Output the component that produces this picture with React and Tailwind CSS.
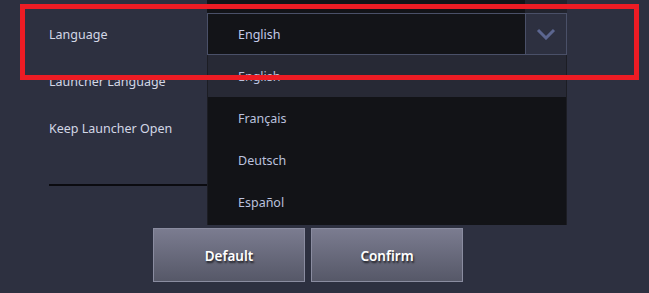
import React from "react";

export default function App() {
  const items = ["English", "Français", "Deutsch", "Español"];
  return (
    <div
      className="relative w-[649px] h-[293px] overflow-hidden bg-[#2d3040]"
      style={{ fontFamily: '"Noto Sans", "Open Sans", sans-serif' }}
    >
      {/* top strip: bottom of the previous control */}
      <div className="flex h-[13px]">
        <div className="w-[207px]" />
        <div className="w-[318px] bg-[#131418]" />
        <div className="w-[42px] bg-[#22242e]" />
      </div>

      {/* Language row */}
      <div className="flex items-center h-[42px]">
        <div className="w-[207px] pl-[49px] pt-[2px] text-[12.5px] text-[#d3d7e6]">Language</div>
        <div className="flex w-[360px] h-[42px] border border-[#4a5068] bg-[#131418]">
          <div className="flex-1 flex items-center pl-[30px] pt-[2px] text-[12.5px] text-[#c3cae8]">English</div>
          <div className="w-[41px] flex items-center justify-center border-l border-[#4a5068] bg-[#2d3040]">
            <svg width="20" height="12" viewBox="0 0 20 12">
              <path d="M2 2 L10 10 L18 2" fill="none" stroke="#5c6690" strokeWidth="3" />
            </svg>
          </div>
        </div>
      </div>

      <div className="flex items-center h-[42px] mt-[5px]">
        <div className="pl-[49px] pt-[2px] text-[12.5px] text-[#d3d7e6]">Launcher Language</div>
      </div>
      <div className="flex items-center h-[42px] mt-[5px]">
        <div className="pl-[49px] pt-[2px] text-[12.5px] text-[#d3d7e6]">Keep Launcher Open</div>
      </div>

      <div className="ml-[49px] w-[517px] h-[2px] mt-[35px] bg-[#0b0b10]" />

      <div className="flex gap-[6px] pl-[153px] mt-[42px]">
        {["Default", "Confirm"].map((t) => (
          <button
            key={t}
            className="w-[152px] h-[54px] pt-[2px] border border-[#8a8ca0] bg-gradient-to-b from-[#7b7c90] to-[#565868] text-[13.5px] font-semibold text-white [text-shadow:1px_2px_2px_rgba(0,0,0,0.7)]"
          >
            {t}
          </button>
        ))}
      </div>

      {/* dropdown list */}
      <div className="absolute left-[207px] top-[55px] w-[360px] h-[170px] bg-[#121317] border-x border-[#1c1d24]">
        {items.map((it, i) => (
          <div
            key={it}
            className={`h-[42px] flex items-center pl-[30px] pt-[2px] text-[12.5px] text-[#bac1de] ${i === 0 ? "bg-[#272935]" : ""}`}
          >
            {it}
          </div>
        ))}
      </div>

      {/* red highlight */}
      <div className="absolute left-[20px] top-[4px] w-[619px] h-[76px] border-[5px] border-[#ed1c24]" />
    </div>
  );
}
